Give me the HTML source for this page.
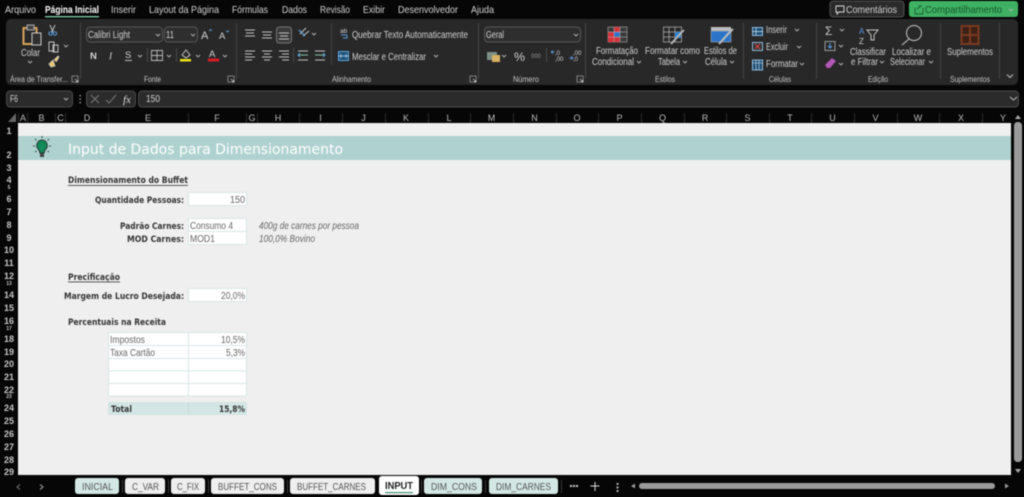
<!DOCTYPE html>
<html lang="pt"><head><meta charset="utf-8"><title>Input</title>
<style>
html,body{margin:0;padding:0;background:#060606;width:1024px;height:497px;overflow:hidden}
svg{display:block;filter:blur(.4px)}
text{font-family:"Liberation Sans",sans-serif;font-size:9.8px;fill:#d2d2d2}
.s{font-size:8.2px;fill:#c4c4c4}
.b{font-family:"DejaVu Sans",sans-serif;font-weight:bold;font-size:9px;fill:#333}
.c{font-size:9.8px;fill:#666}
.t{font-size:10.5px;fill:#555}
.h{font-size:9px;fill:#bbb;text-anchor:middle}
.r{font-size:9px;fill:#c4c4c4;text-anchor:middle;font-weight:bold}
.m{font-size:10.5px}
.ln{fill:none;stroke:#c2c2c2;stroke-width:1}
.chev{fill:none;stroke:#b5b5b5;stroke-width:.9}
</style></head><body>
<svg width="1024" height="497" viewBox="0 0 1024 497" xmlns="http://www.w3.org/2000/svg">
<defs><path id="v" d="M-2-1 0 1 2-1" class="chev"/><g id="lau"><path d="M-3 3V-3H3V3Z" fill="none" stroke="#999" stroke-width=".8"/><path d="M0 0 3 3M1 3H3V1" fill="none" stroke="#ccc" stroke-width=".8"/></g></defs>
<rect width="1024" height="497" fill="#060606"/>

<!-- Menu -->
<text class="m" x="5" y="13" textLength="31" lengthAdjust="spacingAndGlyphs">Arquivo</text>
<text class="m" x="45" y="13" textLength="54" lengthAdjust="spacingAndGlyphs" style="fill:#fff;font-weight:bold">Página Inicial</text>
<text class="m" x="111" y="13" textLength="25" lengthAdjust="spacingAndGlyphs">Inserir</text>
<text class="m" x="149" y="13" textLength="70" lengthAdjust="spacingAndGlyphs">Layout da Página</text>
<text class="m" x="232" y="13" textLength="36" lengthAdjust="spacingAndGlyphs">Fórmulas</text>
<text class="m" x="282" y="13" textLength="25" lengthAdjust="spacingAndGlyphs">Dados</text>
<text class="m" x="320" y="13" textLength="30" lengthAdjust="spacingAndGlyphs">Revisão</text>
<text class="m" x="363" y="13" textLength="22" lengthAdjust="spacingAndGlyphs">Exibir</text>
<text class="m" x="398" y="13" textLength="60" lengthAdjust="spacingAndGlyphs">Desenvolvedor</text>
<text class="m" x="471" y="13" textLength="23" lengthAdjust="spacingAndGlyphs">Ajuda</text>
<rect x="45" y="16" width="54" height="1.4" fill="#7cc5a2"/>
<rect x="830" y="1" width="74" height="16" rx="3" fill="#2a2a2a" stroke="#4f4f4f"/>
<path d="M836 6h8v6h-5l-2 2v-2h-1z" fill="none" stroke="#ddd" stroke-width=".9"/>
<text class="m" x="846" y="13" textLength="51" lengthAdjust="spacingAndGlyphs">Comentários</text>
<rect x="909" y="1" width="109" height="16" rx="3" fill="#3fb163"/>
<path d="M915 8v6h8V8M917 9l4-3h-2" fill="none" stroke="#135c2e" stroke-width=".9"/>
<text class="m" x="925" y="13" textLength="77" lengthAdjust="spacingAndGlyphs" style="fill:#13552b">Compartilhamento</text>
<use href="#v" x="1011" y="10"/>

<!-- Ribbon -->
<rect x="6" y="19" width="1012" height="66" rx="5" fill="#282828"/>
<g fill="#444"><rect x="80" y="23" width="1" height="56"/><rect x="236" y="23" width="1" height="56"/><rect x="478" y="23" width="1" height="56"/><rect x="585" y="23" width="1" height="56"/><rect x="743" y="23" width="1" height="56"/><rect x="816" y="23" width="1" height="56"/><rect x="940" y="23" width="1" height="56"/><rect x="999" y="23" width="1" height="56"/></g>

<!-- Clipboard -->
<rect x="23.500" y="28" width="13" height="16" fill="none" stroke="#d9a35a" stroke-width="2"/>
<rect x="27" y="25" width="7" height="5" fill="#444" stroke="#bbb" stroke-width=".9"/>
<rect x="32" y="33" width="9" height="12" fill="#2f2f2f" stroke="#c9c9c9"/>
<text x="21" y="56" textLength="19" lengthAdjust="spacingAndGlyphs">Colar</text>
<use href="#v" x="30" y="62"/>
<path d="M50 25 53 32M55 25 52 32" stroke="#ddd" stroke-width=".9" fill="none"/><circle cx="50.500" cy="33.500" r="1.700" fill="none" stroke="#5aa0e0"/><circle cx="55" cy="33.500" r="1.700" fill="none" stroke="#5aa0e0"/>
<path d="M49 42h5v9h-5zM53 45h5v7h-5z" fill="#282828" stroke="#ccc" stroke-width=".9"/>
<use href="#v" x="66" y="46"/>
<path d="M49 64 53 60 55 66 51 67ZM54 60 58 56 59 57 56 62" fill="#e8c060" stroke="#ddd" stroke-width=".7"/>
<text class="s" x="10" y="82" textLength="58" lengthAdjust="spacingAndGlyphs">Área de Transfer...</text>
<use href="#lau" x="75" y="79"/>

<!-- Font -->
<rect x="86.500" y="27" width="76" height="15" rx="3.500" fill="#2e2e2e" stroke="#555"/>
<text x="88" y="38" textLength="42" lengthAdjust="spacingAndGlyphs">Calibri Light</text>
<use href="#v" x="158" y="35"/>
<rect x="164.500" y="27" width="33" height="15" rx="3.500" fill="#2e2e2e" stroke="#555"/>
<text x="166" y="38" textLength="8" lengthAdjust="spacingAndGlyphs">11</text>
<use href="#v" x="193" y="35"/>
<text x="201" y="39" style="font-size:11px">A</text><path d="M209 31l1.500-1.500 1.500 1.500" fill="none" stroke="#6aa8e8" stroke-width=".8"/>
<text x="219" y="39" style="font-size:9.500px">A</text><path d="M226 30.500l1.500 1.500 1.500-1.500" fill="none" stroke="#6aa8e8" stroke-width=".8"/>
<text x="90" y="59" style="font-size:9.500px;font-weight:bold">N</text>
<text x="109" y="59" style="font-size:9.500px;font-family:'Liberation Serif',serif;font-style:italic">I</text>
<text x="125" y="58" style="font-size:9.500px">S</text><rect x="125" y="60" width="7" height=".9" fill="#ccc"/>
<use href="#v" x="140" y="56"/><rect x="147" y="48" width="1" height="14" fill="#484848"/>
<path d="M151.500 50.500h11v10h-11zM157 50.500v10M151.500 55.500h11" fill="none" stroke="#bbb" stroke-width=".9"/>
<use href="#v" x="169" y="56"/><rect x="176" y="48" width="1" height="14" fill="#484848"/>
<path d="M182 55 186 50 190 55 186 58Z" fill="none" stroke="#ccc" stroke-width=".9"/><rect x="180" y="59" width="11" height="2.500" fill="#ece214"/>
<use href="#v" x="198" y="56"/>
<text x="209" y="57" style="font-size:9.500px">A</text><rect x="208" y="58.500" width="11" height="3" fill="#d81c24"/>
<use href="#v" x="225" y="56"/>
<text class="s" x="144" y="82" textLength="17" lengthAdjust="spacingAndGlyphs">Fonte</text>
<use href="#lau" x="231" y="79"/>

<!-- Align -->
<rect x="276.500" y="27" width="15" height="16" rx="3" fill="#3a3a3a" stroke="#777"/>
<path class="ln" d="M245 30h10M246 33h8M245 36h10M262 32h10M263 35h8M262 38h10M279 33h10M280 36h8M279 39h10"/>
<path d="M300 34 306 28M303 36l6-5" stroke="#c9c9c9" fill="none"/><path d="M299 30l6 6" stroke="#5a9ee0" stroke-width="1.300"/><use href="#v" x="314" y="34"/>
<path class="ln" d="M245 51h10M245 54h7M245 57h10M245 60h7M262 51h10M264 54h6M262 57h10M264 60h6M279 51h10M282 54h7M279 57h10M282 60h7M298 51h10M298 60h10M315 51h10M315 60h10"/>
<path d="M298 55h10M315 55h10" stroke="#7cc0a0"/><path d="M300 53l-2 2 2 2M323 53l2 2-2 2" fill="none" stroke="#5a9ee0"/>
<rect x="293" y="48" width="1" height="14" fill="#484848"/><rect x="331" y="23" width="1" height="42" fill="#444"/>
<text x="340" y="33" style="font-size:6.500px">ab</text><path d="M341 35h6v3h-4" fill="none" stroke="#5a9ee0" stroke-width=".9"/>
<text x="352" y="38" textLength="116" lengthAdjust="spacingAndGlyphs">Quebrar Texto Automaticamente</text>
<rect x="338.500" y="51.500" width="10" height="9" fill="#1f4f74" stroke="#5ca5dc"/><path d="M338 56h11M341 54v4M346 54v4" stroke="#bcd9ee" stroke-width=".8"/>
<text x="352" y="60" textLength="74" lengthAdjust="spacingAndGlyphs">Mesclar e Centralizar</text>
<use href="#v" x="436" y="56"/>
<text class="s" x="332" y="82" textLength="39" lengthAdjust="spacingAndGlyphs">Alinhamento</text>
<use href="#lau" x="473" y="79"/>

<!-- Number -->
<rect x="484.500" y="27" width="96" height="15" rx="3.500" fill="#2e2e2e" stroke="#555"/>
<text x="486" y="38" textLength="18" lengthAdjust="spacingAndGlyphs">Geral</text>
<use href="#v" x="576" y="35"/>
<rect x="487" y="52" width="10" height="8" fill="#7d8f86"/><rect x="492" y="55" width="8" height="7" fill="#d9b162"/>
<use href="#v" x="504" y="56"/>
<text x="514" y="61" textLength="11" lengthAdjust="spacingAndGlyphs" style="font-size:12px">%</text>
<text x="531" y="58" textLength="10" lengthAdjust="spacingAndGlyphs" style="font-size:6px;fill:#999">000</text>
<rect x="546" y="48" width="1" height="14" fill="#484848"/>
<text x="555" y="55" style="font-size:6px">,0</text><text x="555" y="61" style="font-size:6px">,00</text><path d="M551 52h4M551 52l2-1.500M551 52l2 1.500" stroke="#5a9ee0" fill="none" stroke-width=".8"/>
<text x="573" y="55" style="font-size:6px">,00</text><text x="573" y="61" style="font-size:6px">,0</text><path d="M569 58h4l-2-1.500M573 58l-2 1.500" stroke="#5a9ee0" fill="none" stroke-width=".8"/>
<text class="s" x="513" y="82" textLength="26" lengthAdjust="spacingAndGlyphs">Número</text>
<use href="#lau" x="580" y="79"/>

<!-- Styles -->
<rect x="608" y="27" width="19" height="15" fill="#3a3a3a" stroke="#999" stroke-width=".7"/>
<rect x="608" y="32" width="6" height="5" fill="#d6323a"/><rect x="614" y="27" width="6" height="5" fill="#d6323a"/><rect x="614" y="32" width="6" height="5" fill="#2b74c8"/><rect x="608" y="37" width="12" height="5" fill="#d6323a"/>
<path d="M614 27v15M620 27v15M608 32h19M608 37h19" stroke="#bbb" stroke-width=".5"/>
<text x="596" y="54" textLength="42" lengthAdjust="spacingAndGlyphs">Formatação</text>
<text x="592" y="65" textLength="42" lengthAdjust="spacingAndGlyphs">Condicional</text><use href="#v" x="639" y="62"/>
<path d="M663.500 27h18v15h-18zM669 27v15M675 27v15M663.500 32h18M663.500 37h18" fill="none" stroke="#aaa" stroke-width=".8"/>
<rect x="675" y="32" width="6" height="6" fill="#2f7fd0"/><path d="M671 44 681 33 684 30" stroke="#b8b8b8" stroke-width="1.800" fill="none"/>
<text x="645" y="54" textLength="55" lengthAdjust="spacingAndGlyphs">Formatar como</text>
<text x="658" y="65" textLength="22" lengthAdjust="spacingAndGlyphs">Tabela</text><use href="#v" x="685" y="62"/>
<rect x="711" y="27" width="20" height="4" fill="#bdbdbd"/><rect x="711" y="31" width="20" height="11" fill="#2b74c8" stroke="#aaa" stroke-width=".6"/>
<path d="M719 44 728 34 733 29" stroke="#bcbcbc" stroke-width="2" fill="none"/>
<text x="704" y="54" textLength="33" lengthAdjust="spacingAndGlyphs">Estilos de</text>
<text x="705" y="65" textLength="22" lengthAdjust="spacingAndGlyphs">Célula</text><use href="#v" x="732" y="62"/>
<text class="s" x="655" y="82" textLength="20" lengthAdjust="spacingAndGlyphs">Estilos</text>

<!-- Cells -->
<rect x="752.500" y="27.500" width="10" height="8" fill="#1f4f74" stroke="#8cb8dc"/><path d="M752 31.500h11M756 28v7" stroke="#cfe3f2" stroke-width=".7"/>
<rect x="752.500" y="42.500" width="10" height="8" fill="#333" stroke="#8cb8dc"/><path d="M755 44 760 49M760 44 755 49" stroke="#e04848"/>
<rect x="752.500" y="60" width="10" height="10" fill="#1f4f74" stroke="#8cb8dc"/><path d="M752 63h11M756 60v10M759 60v10" stroke="#cfe3f2" stroke-width=".6"/>
<text x="766" y="33" textLength="21" lengthAdjust="spacingAndGlyphs">Inserir</text><use href="#v" x="797" y="30"/>
<text x="766" y="50" textLength="22" lengthAdjust="spacingAndGlyphs">Excluir</text><use href="#v" x="799" y="47"/>
<text x="766" y="67" textLength="32" lengthAdjust="spacingAndGlyphs">Formatar</text><use href="#v" x="802" y="64"/>
<text class="s" x="769" y="82" textLength="22" lengthAdjust="spacingAndGlyphs">Células</text>

<!-- Edit -->
<text x="825" y="35" style="font-size:12px;fill:#c4c4c4">Σ</text><use href="#v" x="842" y="30"/>
<rect x="825" y="41.500" width="10" height="9" fill="#2a2a2a" stroke="#9a9a9a"/><path d="M830 43v5M828 46l2 2 2-2" stroke="#5a9ee0" fill="none"/><use href="#v" x="841" y="46"/>
<path d="M825 65 832 58 836 61 830 68 827 68Z" fill="#b456b8"/><use href="#v" x="841" y="64"/>
<text x="859" y="34" style="font-size:8px;fill:#5a9ee0">A</text><text x="859" y="44" style="font-size:8px">Z</text>
<path d="M867 30h11l-4 5v5h-3v-5z" fill="none" stroke="#c4c4c4"/>
<circle cx="914" cy="33" r="7.500" fill="none" stroke="#c9c9c9"/><path d="M909 39 902 45" stroke="#c9c9c9"/>
<text x="850" y="55" textLength="36" lengthAdjust="spacingAndGlyphs">Classificar</text>
<text x="851" y="65" textLength="27" lengthAdjust="spacingAndGlyphs">e Filtrar</text><use href="#v" x="882" y="62"/>
<text x="892" y="55" textLength="39" lengthAdjust="spacingAndGlyphs">Localizar e</text>
<text x="890" y="65" textLength="35" lengthAdjust="spacingAndGlyphs">Selecionar</text><use href="#v" x="931" y="62"/>
<text class="s" x="868" y="82" textLength="20" lengthAdjust="spacingAndGlyphs">Edição</text>

<!-- Add-ins -->
<rect x="960.500" y="25" width="19" height="20" fill="#7a3a22"/>
<rect x="962.500" y="27" width="6.500" height="7" fill="#3d2016"/><rect x="971" y="27" width="6.500" height="7" fill="#3d2016"/><rect x="962.500" y="36" width="6.500" height="7" fill="#3d2016"/><rect x="971" y="36" width="6.500" height="7" fill="#3d2016"/>
<text x="947" y="55" textLength="46" lengthAdjust="spacingAndGlyphs">Suplementos</text>
<text class="s" x="950" y="82" textLength="40" lengthAdjust="spacingAndGlyphs">Suplementos</text>
<path d="M1007 74.500 1010 77.500 1013 74.500" fill="none" stroke="#bbb"/>

<!-- Formula bar -->
<rect x="6.500" y="91" width="66" height="16" rx="3.500" fill="#2b2b2b" stroke="#4a4a4a"/>
<text x="10" y="102" textLength="8" lengthAdjust="spacingAndGlyphs">F6</text><use href="#v" x="66" y="99"/>
<g fill="#bbb"><rect x="79.500" y="95" width="1.300" height="1.300"/><rect x="79.500" y="98.500" width="1.300" height="1.300"/><rect x="79.500" y="102" width="1.300" height="1.300"/></g>
<rect x="86.500" y="91" width="49" height="16" rx="3.500" fill="#2b2b2b" stroke="#4a4a4a"/>
<path d="M91 95 99 103M99 95 91 103M106 100 109 103 116 95" fill="none" stroke="#777"/>
<text x="123" y="103" style="font-family:'Liberation Serif',serif;font-style:italic;font-size:11px;fill:#ddd">fx</text>
<rect x="138.500" y="91" width="880" height="16" rx="3.500" fill="#2b2b2b" stroke="#4a4a4a"/>
<text x="146" y="102" textLength="14" lengthAdjust="spacingAndGlyphs">150</text>
<path d="M1010 97 1013.500 100 1017 97" fill="none" stroke="#bbb"/>

<!-- Column headers -->
<path d="M16 113V122H8Z" fill="#666"/>
<g fill="#2c2c2c"><rect x="18" y="113" width="1" height="10"/><rect x="27" y="113" width="1" height="10"/><rect x="55" y="113" width="1" height="10"/><rect x="65" y="113" width="1" height="10"/><rect x="108" y="113" width="1" height="10"/><rect x="188" y="113" width="1" height="10"/><rect x="246" y="113" width="1" height="10"/><rect x="257" y="113" width="1" height="10"/><rect x="299" y="113" width="1" height="10"/><rect x="342" y="113" width="1" height="10"/><rect x="385" y="113" width="1" height="10"/><rect x="428" y="113" width="1" height="10"/><rect x="470" y="113" width="1" height="10"/><rect x="513" y="113" width="1" height="10"/><rect x="556" y="113" width="1" height="10"/><rect x="598" y="113" width="1" height="10"/><rect x="641" y="113" width="1" height="10"/><rect x="684" y="113" width="1" height="10"/><rect x="726" y="113" width="1" height="10"/><rect x="769" y="113" width="1" height="10"/><rect x="811" y="113" width="1" height="10"/><rect x="854" y="113" width="1" height="10"/><rect x="897" y="113" width="1" height="10"/><rect x="939" y="113" width="1" height="10"/><rect x="982" y="113" width="1" height="10"/></g>
<g>
<text class="h" x="23" y="121">A</text><text class="h" x="41.500" y="121">B</text><text class="h" x="60.500" y="121">C</text><text class="h" x="87" y="121">D</text><text class="h" x="148" y="121">E</text><text class="h" x="217" y="121">F</text><text class="h" x="252" y="121">G</text><text class="h" x="278" y="121">H</text><text class="h" x="320.500" y="121">I</text><text class="h" x="363.500" y="121">J</text><text class="h" x="406" y="121">K</text><text class="h" x="449" y="121">L</text><text class="h" x="491.500" y="121">M</text><text class="h" x="534.500" y="121">N</text><text class="h" x="577" y="121">O</text><text class="h" x="619.500" y="121">P</text><text class="h" x="662.500" y="121">Q</text><text class="h" x="705" y="121">R</text><text class="h" x="747.500" y="121">S</text><text class="h" x="790" y="121">T</text><text class="h" x="832.500" y="121">U</text><text class="h" x="875.500" y="121">V</text><text class="h" x="918" y="121">W</text><text class="h" x="961" y="121">X</text><text class="h" x="1003" y="121">Y</text>
</g>

<!-- Sheet -->
<rect x="18" y="123" width="993" height="352" fill="#efefef"/>
<rect x="18" y="136" width="993" height="24" fill="#afd2d0"/>

<!-- Row headers -->
<g>
<text class="r" x="9" y="134">1</text><text class="r" x="9" y="158">2</text><text class="r" x="9" y="171">3</text><text class="r" x="9" y="183">4</text><text class="r" x="9" y="189" style="font-size:5px">5</text><text class="r" x="9" y="202">6</text><text class="r" x="9" y="215">7</text><text class="r" x="9" y="228">8</text><text class="r" x="9" y="241">9</text><text class="r" x="9" y="253">10</text><text class="r" x="9" y="266">11</text><text class="r" x="9" y="279">12</text><text class="r" x="9" y="285" style="font-size:5px">13</text><text class="r" x="9" y="298">14</text><text class="r" x="9" y="311">15</text><text class="r" x="9" y="324">16</text><text class="r" x="9" y="330" style="font-size:5px">17</text><text class="r" x="9" y="342">18</text><text class="r" x="9" y="355">19</text><text class="r" x="9" y="367">20</text><text class="r" x="9" y="380">21</text><text class="r" x="9" y="393">22</text><text class="r" x="9" y="398" style="font-size:5px">23</text><text class="r" x="9" y="411">24</text><text class="r" x="9" y="424">25</text><text class="r" x="9" y="437">26</text><text class="r" x="9" y="450">27</text><text class="r" x="9" y="463">28</text><text class="r" x="9" y="475">29</text>
</g>

<!-- Bulb -->
<path d="M42 140a5.500 5.500 0 0 1 3.500 9.500c-1 1-1.300 2-1.300 3.500h-4.400c0-1.500-.3-2.500-1.300-3.500A5.500 5.500 0 0 1 42 140Z" fill="#138a5a" stroke="#1c1c1c" stroke-width=".8"/>
<rect x="40" y="153.500" width="4" height="3.500" fill="#444"/>
<path d="M42 136v2M35 139l1.500 1.500M49 139l-1.500 1.500M33 146h2M49 146h2M35 152l1.500-1M49 152l-1.500-1" stroke="#222" stroke-width=".8"/>
<text x="68" y="154" textLength="275" lengthAdjust="spacingAndGlyphs" style="font-family:'DejaVu Sans',sans-serif;font-size:14px;fill:#fff">Input de Dados para Dimensionamento</text>

<text class="b" x="68" y="183" textLength="120" lengthAdjust="spacingAndGlyphs">Dimensionamento do Buffet</text><rect x="68" y="185" width="120" height=".8" fill="#333"/>
<text class="b" x="95" y="203" textLength="89" lengthAdjust="spacingAndGlyphs">Quantidade Pessoas:</text>
<text class="b" x="120" y="229" textLength="64" lengthAdjust="spacingAndGlyphs">Padrão Carnes:</text>
<text class="b" x="127" y="242" textLength="57" lengthAdjust="spacingAndGlyphs">MOD Carnes:</text>
<text class="b" x="68" y="280" textLength="52" lengthAdjust="spacingAndGlyphs">Precificação</text><rect x="68" y="281.500" width="52" height=".8" fill="#333"/>
<text class="b" x="64" y="299" textLength="120" lengthAdjust="spacingAndGlyphs">Margem de Lucro Desejada:</text>
<text class="b" x="68" y="325" textLength="98" lengthAdjust="spacingAndGlyphs">Percentuais na Receita</text>

<g fill="#fff" stroke="#d3e4e2" stroke-width=".8">
<rect x="188.500" y="192.500" width="58" height="13"/>
<rect x="188.500" y="218.500" width="58" height="13"/><rect x="188.500" y="231.500" width="58" height="13"/>
<rect x="188.500" y="288.500" width="58" height="13"/>
<rect x="108.500" y="332.500" width="80" height="13"/><rect x="188.500" y="332.500" width="58" height="13"/>
<rect x="108.500" y="345.500" width="80" height="13"/><rect x="188.500" y="345.500" width="58" height="13"/>
<rect x="108.500" y="358.500" width="80" height="12.500"/><rect x="188.500" y="358.500" width="58" height="12.500"/>
<rect x="108.500" y="371" width="80" height="12.500"/><rect x="188.500" y="371" width="58" height="12.500"/>
<rect x="108.500" y="383.500" width="80" height="12.500"/><rect x="188.500" y="383.500" width="58" height="12.500"/>
</g>
<rect x="108" y="402" width="139" height="13" fill="#d3e5e4"/><rect x="188" y="402" width=".8" height="13" fill="#c4d9d7"/>

<text class="c" x="230" y="203" textLength="15" lengthAdjust="spacingAndGlyphs">150</text>
<text class="c" x="190" y="229" textLength="43" lengthAdjust="spacingAndGlyphs">Consumo 4</text>
<text class="c" x="190" y="242" textLength="25" lengthAdjust="spacingAndGlyphs">MOD1</text>
<text class="c" x="259" y="229" textLength="100" lengthAdjust="spacingAndGlyphs" style="font-style:italic">400g de carnes por pessoa</text>
<text class="c" x="259" y="242" textLength="56" lengthAdjust="spacingAndGlyphs" style="font-style:italic">100,0% Bovino</text>
<text class="c" x="221" y="299" textLength="24" lengthAdjust="spacingAndGlyphs">20,0%</text>
<text class="c" x="110" y="343" textLength="35" lengthAdjust="spacingAndGlyphs">Impostos</text>
<text class="c" x="221" y="343" textLength="24" lengthAdjust="spacingAndGlyphs">10,5%</text>
<text class="c" x="110" y="356" textLength="45" lengthAdjust="spacingAndGlyphs">Taxa Cartão</text>
<text class="c" x="226" y="356" textLength="19" lengthAdjust="spacingAndGlyphs">5,3%</text>
<text class="b" x="111" y="412" textLength="21" lengthAdjust="spacingAndGlyphs">Total</text>
<text class="b" x="219" y="412" textLength="26" lengthAdjust="spacingAndGlyphs">15,8%</text>

<!-- Vertical scroll -->
<path d="M1015 119 1018 115 1021 119Z" fill="#aaa"/>
<rect x="1014" y="122" width="8" height="340" rx="3.500" fill="#9a9a9a"/>
<path d="M1015 469 1018 473 1021 469Z" fill="#aaa"/>

<!-- Sheet tabs -->
<path d="M20 484.500 17 487 20 489.500" stroke="#777" fill="none"/>
<path d="M40 484.500l3 2.500-3 2.500" stroke="#aaa" fill="none"/>
<rect x="75" y="478" width="44" height="16" rx="3" fill="#d3e8e5"/>
<rect x="125" y="478" width="40" height="16" rx="3" fill="#eeeeee"/>
<rect x="171" y="478" width="34" height="16" rx="3" fill="#eeeeee"/>
<rect x="211" y="478" width="73" height="16" rx="3" fill="#eeeeee"/>
<rect x="290" y="478" width="85" height="16" rx="3" fill="#eeeeee"/>
<rect x="379" y="476" width="40" height="19" rx="3" fill="#ffffff"/>
<rect x="385" y="492" width="28" height="1.200" fill="#3f8f70"/>
<rect x="424" y="478" width="58" height="16" rx="3" fill="#d3e8e5"/>
<rect x="489" y="478" width="69" height="16" rx="3" fill="#d3e8e5"/>
<g fill="#3a3a3a"><rect x="122" y="480" width="1" height="13"/><rect x="168" y="480" width="1" height="13"/><rect x="208" y="480" width="1" height="13"/><rect x="287" y="480" width="1" height="13"/><rect x="421" y="480" width="1" height="13"/><rect x="485" y="480" width="1" height="13"/><rect x="561" y="480" width="1" height="13"/></g>
<text class="t" x="82" y="490" textLength="31" lengthAdjust="spacingAndGlyphs">INICIAL</text>
<text class="t" x="132" y="490" textLength="27" lengthAdjust="spacingAndGlyphs">C_VAR</text>
<text class="t" x="177" y="490" textLength="22" lengthAdjust="spacingAndGlyphs">C_FIX</text>
<text class="t" x="218" y="490" textLength="59" lengthAdjust="spacingAndGlyphs">BUFFET_CONS</text>
<text class="t" x="297" y="490" textLength="69" lengthAdjust="spacingAndGlyphs">BUFFET_CARNES</text>
<text class="t" x="385" y="489" textLength="28" lengthAdjust="spacingAndGlyphs" style="fill:#222;font-weight:bold">INPUT</text>
<text class="t" x="431" y="490" textLength="46" lengthAdjust="spacingAndGlyphs">DIM_CONS</text>
<text class="t" x="496" y="490" textLength="55" lengthAdjust="spacingAndGlyphs">DIM_CARNES</text>
<g fill="#ccc"><rect x="570" y="485" width="2" height="2"/><rect x="573" y="485" width="2" height="2"/><rect x="576" y="485" width="2" height="2"/></g>
<path d="M595 482v9M590.500 486h9" stroke="#ddd"/>
<g fill="#aaa"><rect x="616.500" y="483" width="2" height="2"/><rect x="616.500" y="486.500" width="2" height="2"/><rect x="616.500" y="490" width="2" height="2"/></g>
<path d="M635 483.500 631 486 635 488.500Z" fill="#999"/>
<rect x="639" y="483" width="356" height="6" rx="3" fill="#9a9a9a"/>
<path d="M1005 483.500 1009 486 1005 488.500Z" fill="#999"/>
</svg>
</body></html>
